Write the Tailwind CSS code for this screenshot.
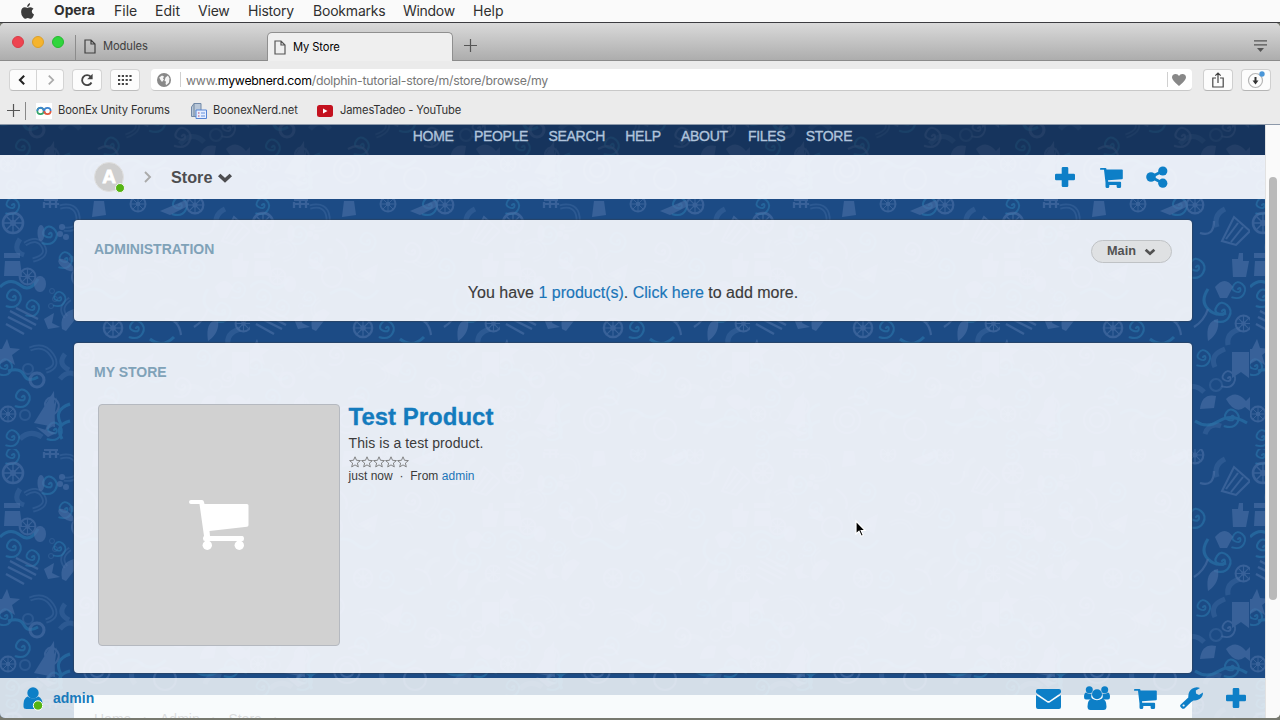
<!DOCTYPE html>
<html lang="en">
<head>
  <meta charset="UTF-8">
  <meta name="viewport" content="width=device-width, initial-scale=1">
  <title>My Store</title>
  <script src="https://cdn.jsdelivr.net/npm/@tailwindcss/browser@4"></script>
</head>
<body class="w-[1280px] h-[720px] overflow-hidden bg-[#77796f] flex flex-col relative">

  <!-- Shared icons -->
  <svg class="hidden">
    <symbol id="cart" viewBox="0 0 60 50">
      <path d="M2 0h11q1.500 0 2 2l.5 2H58q1.500 0 1.500 1.500v19.500q0 1.500-1.500 1.700L20.500 31l.5 5h32.500q1.500 0 1.500 2.500T53.500 41H16q-2 0-2-2.500 0-2 1-2.500L10.500 4H2Q0 4 0 2T2 0z"/>
      <circle cx="18.300" cy="45.300" r="4.700"/><circle cx="50.300" cy="45.300" r="4.700"/>
    </symbol>
    <symbol id="cart-sm" viewBox="0 0 23 20">
      <path d="M.8 0h4.700q.8 0 .9.8l.1.600h15.500q.8 0 .8.8v8q0 .9-.9 1L8 12.200l.2 1.600h12q.9 0 .9 1v3.700q0 1.500-1.500 1.500h-1.500q-1.500 0-1.500-1.500v-1.500H9.300v1.500q0 1.500-1.500 1.500H7q-1.500 0-1.500-1.500v-4L4 1.800H.8Q0 1.800 0 .9T.8 0z"/>
    </symbol>
    <symbol id="plus" viewBox="0 0 20 20">
      <path d="M8 0h4q1.300 0 1.300 1.300v5.400h5.400Q20 6.700 20 8v4q0 1.300-1.300 1.300h-5.400v5.400Q13.300 20 12 20H8q-1.300 0-1.300-1.300v-5.400H1.300Q0 13.300 0 12V8q0-1.300 1.300-1.300h5.400V1.300Q6.700 0 8 0z"/>
    </symbol>
    <symbol id="page" viewBox="0 0 12 15">
      <path d="M1 1h6l4 4v9H1zM7 1v4h4" fill="none" stroke="currentColor" stroke-width="1.200"/>
    </symbol>
    <symbol id="chevron" viewBox="0 0 16 10">
      <path d="M2.200 2 8 7.300 13.800 2" fill="none" stroke="currentColor" stroke-width="3.600" stroke-linecap="butt"/>
    </symbol>
    <symbol id="star" viewBox="0 0 12 12">
      <path d="M6 .8 7.500 4.300l3.900.3-3 2.500.9 3.800L6 8.900 2.700 10.900l.9-3.800-3-2.500 3.900-.3z" fill="none" stroke="currentColor" stroke-width=".9"/>
    </symbol>
    <symbol id="swirl" viewBox="-12 -12 24 24" overflow="visible">
      <path d="M0 0q3-3 3 1t-6 2-2-8 10-1 2 12-14 4" fill="none" stroke="currentColor" stroke-width="2.200" stroke-linecap="round"/>
    </symbol>
    <symbol id="wheel" viewBox="-12 -12 24 24" overflow="visible">
      <circle r="10" fill="none" stroke="currentColor" stroke-width="2.500"/>
      <circle r="3" fill="currentColor"/>
      <path d="M0-10V10M-10 0H10M-7-7 7 7M7-7-7 7" stroke="currentColor" stroke-width="1.300"/>
    </symbol>
  </svg>

  <!-- macOS menu bar -->
  <header class="h-[23px] shrink-0 bg-[#fafafa] border-b border-[#3c3c40] flex items-center pl-[21px] pb-px text-[14px] text-[#303030] whitespace-nowrap font-['Inter',sans-serif]">
    <svg class="w-[13px] h-[16px] mr-[20px]" viewBox="0 0 13 16" fill="#3c3c3c"><path d="M9 0q.2 2-1 3.100Q7 4.200 6.200 4.100 6 2.500 7.100 1.300 8 .3 9 0zM12.500 5.700q-1.800 1-1.700 2.900.1 2.100 2.200 3-.5 1.500-1.400 2.800-.9 1.400-1.900 1.400-.5 0-1.300-.3-.8-.4-1.600-.4t-1.600.4q-.7.300-1.200.300-1 0-2.100-1.700Q.1 11.500.1 8.900q0-2.300 1.200-3.600 1-1.100 2.400-1.100.6 0 1.500.4t1.200.4q.300 0 1.400-.4 1-.4 1.700-.4 1.800.1 3 1.500z"/></svg>
    <span class="w-[60px] font-bold text-[13.800px]">Opera</span>
    <span class="w-[41px]">File</span>
    <span class="w-[43px]">Edit</span>
    <span class="w-[50px] tracking-[-0.2px]">View</span>
    <span class="w-[65px] tracking-[-0.2px]">History</span>
    <span class="w-[90px] tracking-[-0.2px]">Bookmarks</span>
    <span class="w-[70px] tracking-[-0.3px]">Window</span>
    <span>Help</span>
  </header>

  <div class="h-[695px] shrink-0 flex flex-col rounded-t-[5px] rounded-b-[5px] overflow-hidden bg-[#ebebeb] font-['Inter',sans-serif]">

    <!-- Tabs -->
    <div class="h-[38px] shrink-0 bg-linear-to-b from-[#dadada] to-[#adadad] border-b border-[#8b8b8b] flex items-end relative">
      <div class="w-[75px] h-full flex gap-[8px] pl-[12px] pt-[13px]">
        <i class="size-[12px] rounded-full bg-[#ee4450] border border-[#d83c47]"></i>
        <i class="size-[12px] rounded-full bg-[#f5b42e] border border-[#dca02a]"></i>
        <i class="size-[12px] rounded-full bg-[#2fd53c] border border-[#25b931]"></i>
      </div>
      <div class="w-[192px] h-[25px] border-l border-[#8c8c8c] flex items-center gap-[7px] pl-[8px] pb-[2px] text-[11.200px] text-[#404040]">
        <svg class="w-[12px] h-[15px]"><use href="#page"/></svg>
        <span class="tracking-[-0.1px]">Modules</span>
      </div>
      <div class="w-[186px] h-[29px] -mb-px rounded-t-[5px] bg-[#efefef] border border-b-0 border-[#8f8f8f] flex items-center gap-[7px] pl-[6px] text-[11.200px] text-black">
        <svg class="w-[12px] h-[15px] text-[#555]"><use href="#page"/></svg>
        <span class="tracking-[-0.1px]">My Store</span>
      </div>
      <svg class="size-[13px] ml-[11px] mb-[8px]" viewBox="0 0 13 13" stroke="#555" stroke-width="1.200"><path d="M6.500 0v13M0 6.500h13"/></svg>
      <svg class="w-[13px] h-[12px] ml-auto mr-[13px] mb-[8px]" viewBox="0 0 13 12"><path d="M0 .8h13M0 4.900h13" stroke="#555" stroke-width="1.200"/><path d="M3 8h7l-3.500 4z" fill="#555"/></svg>
    </div>

    <!-- Address bar -->
    <div class="h-[37px] shrink-0 flex items-center pl-[9px] pr-[9px] pt-px">
      <div class="flex h-[22px] w-[55px] rounded-[4px] bg-[#fcfcfc] border border-[#d4d4d4] border-b-[#bdbdbd]">
        <svg class="w-1/2 h-full border-r border-[#d4d4d4]" viewBox="0 0 27 20"><path d="M15 5.500 10.500 10l4.500 4.500" fill="none" stroke="#222" stroke-width="2.200"/></svg>
        <svg class="w-1/2 h-full" viewBox="0 0 27 20"><path d="m12 5.500 4.500 4.500-4.500 4.500" fill="none" stroke="#aaa" stroke-width="1.800"/></svg>
      </div>
      <div class="ml-[8px] w-[30px] h-[22px] rounded-[4px] bg-[#fcfcfc] border border-[#d4d4d4] border-b-[#bdbdbd] flex items-center justify-center">
        <svg class="size-[14px]" viewBox="0 0 14 14"><path d="M11.500 9.500A5 5 0 1 1 10.800 3.800" fill="none" stroke="#444" stroke-width="1.900"/><path d="M12.600.8v5.400H7.200z" fill="#444"/></svg>
      </div>
      <div class="ml-[8px] w-[30px] h-[22px] rounded-[4px] bg-[#fcfcfc] border border-[#d4d4d4] border-b-[#bdbdbd] flex items-center justify-center">
        <svg class="w-[14px] h-[12px]" viewBox="0 0 14 12" stroke="#444" stroke-width="2"><path d="M0 2h14M0 6h14M0 10h10" stroke-dasharray="2.200 1.600"/></svg>
      </div>
      <div class="ml-[11px] w-[1041px] h-[22px] rounded-[4px] bg-white border-b border-[#c8c8c8] flex items-center pl-[6px] pr-[6px]">
        <svg class="size-[14px]" viewBox="0 0 14 14"><circle cx="7" cy="7" r="7" fill="#888"/><path d="M2.200 4.500 5 2.500l2 1-1 2 1 1-2 2.500L3.500 7zM8.500 4.500l2.500-2 1.500 3-.5 4-2.500 2.500-1-1 .5-2.500-1.500-.5z" fill="#f5f5f5"/></svg>
        <div class="w-px h-[15px] bg-[#d0d0d0] ml-[9px] mr-[5px]"></div>
        <span class="text-[12.300px] leading-[15px] tracking-[-0.25px] text-[#777] whitespace-nowrap pt-px">www.<span class="text-black">mywebnerd.com</span>/dolphin-tutorial-store/m/store/browse/my</span>
        <div class="w-px h-[15px] bg-[#d0d0d0] ml-auto mr-[4px]"></div>
        <svg class="w-[14px] h-[12px]" viewBox="0 0 14 12"><path d="M7 12Q0 6.500 0 3.600 0 0 3.700 0 6 0 7 2 8 0 10.300 0 14 0 14 3.600 14 6.500 7 12z" fill="#888"/></svg>
      </div>
      <div class="ml-auto w-[30px] h-[22px] rounded-[4px] bg-[#fcfcfc] border border-[#cfcfcf] border-b-[#b5b5b5] flex items-center justify-center">
        <svg class="w-[12px] h-[16px]" viewBox="0 0 12 16" fill="none" stroke="#444" stroke-width="1.200"><path d="M4 6H.8v9h10.400V6H8M6 11V1M3.300 3.700 6 1l2.700 2.700"/></svg>
      </div>
      <div class="ml-[8px] w-[30px] h-[22px] rounded-[4px] bg-[#fcfcfc] border border-[#cfcfcf] border-b-[#b5b5b5] flex items-center justify-center">
        <svg class="w-[18px] h-[18px]" viewBox="0 0 18 18"><circle cx="8.500" cy="9.500" r="7" fill="none" stroke="#b5b5b5" stroke-width="1.200"/><path d="M7.500 6h2v3.500h2l-3 4-3-4h2z" fill="#333"/><circle cx="15" cy="3" r="2.700" fill="#4a96d8"/></svg>
      </div>
    </div>

    <!-- Bookmarks -->
    <div class="h-[27px] shrink-0 border-b border-[#8d99aa] flex items-center pl-[7px] pb-px text-[11.200px] text-[#333] whitespace-nowrap">
      <svg class="size-[13px]" viewBox="0 0 13 13" stroke="#555" stroke-width="1.200"><path d="M6.500 0v13M0 6.500h13"/></svg>
      <div class="w-px h-[18px] bg-[#888] ml-[5px] mr-[10px]"></div>
      <svg class="size-[16px] bg-white" viewBox="0 0 16 16" fill="none" stroke-width="1.700"><circle cx="4.500" cy="8" r="3.200" stroke="#35a56b"/><path d="M1.300 8a3.200 3.200 0 0 1 5.500-2.300L9.300 10.300" stroke="#3d83cf"/><path d="M8.300 8a3.200 3.200 0 0 1 6.400 0" stroke="#3d83cf"/><path d="M14.700 8a3.200 3.200 0 0 1-6.400 0" stroke="#e3593e"/></svg>
      <span class="w-[132px] ml-[6px] tracking-[-0.1px]">BoonEx Unity Forums</span>
      <svg class="w-[17px] h-[16px]" viewBox="0 0 17 16"><path d="M4 .5h7v13H1.500V4z" fill="#b9c7d8" stroke="#7189a8"/><path d="M4 .5v13" stroke="#71869e"/><path d="M6 7h10.500v8.500H6z" fill="#e5eeff" stroke="#5584d4"/><path d="M8 10h1.500M8 13h1.500" stroke="#b64770"/><path d="M11 10h4M11 13h4" stroke="#6591dc"/></svg>
      <span class="w-[104px] ml-[6px] tracking-[-0.05px]">BoonexNerd.net</span>
      <svg class="w-[16px] h-[12px]" viewBox="0 0 16 12"><rect width="16" height="12" rx="2.500" fill="#c4121f"/><path d="M6 3.500v5L10.500 6z" fill="#fff"/></svg>
      <span class="ml-[7px] tracking-[-0.15px]">JamesTadeo - YouTube</span>
    </div>

    <!-- Page -->
    <div class="flex-1 flex min-h-0 font-['Liberation_Sans',Arial,sans-serif]">
      <main class="w-[1265px] relative overflow-hidden">

        <svg class="absolute inset-0 w-full h-full" aria-hidden="true">
          <defs>
            <pattern id="doodles" width="250" height="250" y="74" patternUnits="userSpaceOnUse">
              <rect width="250" height="250" fill="#1c4b85"/>
              <!-- faint filler behind the larger figures -->
              <g color="#3c689f" opacity=".5">
                <path d="M25 45q12-8 18 2t-10 14M60 8q16-4 18 10t-14 12M110 55q-14 6-8 18t18 2M140 75q16-8 22 6M70 100q-12 8-4 18M180 40q12 8 4 20t-20 2M225 10q-12 6-8 18M30 150q14-6 22 6t-6 16M60 180q10-12 20 0M110 165q14-8 24 4t-8 18M180 195q12-14 24-2M135 235q-10-14 8-20M20 240q10-10 22-2M190 110q-12 0-14 14M155 110q10-14 22-4M65 155q-8 10 4 16M205 235q4-12 16-8M240 130q-14 4-12 16M20 40q-8 12 4 16M225 150q-16 6-10 18" fill="none" stroke="currentColor" stroke-width="5"/>
                <path d="M25 45q12-8 18 2t-10 14M60 8q16-4 18 10t-14 12M110 55q-14 6-8 18t18 2M140 75q16-8 22 6M70 100q-12 8-4 18M180 40q12 8 4 20t-20 2M30 150q14-6 22 6t-6 16M110 165q14-8 24 4t-8 18" fill="none" stroke="#1c4b85" stroke-width="1.500"/>
                <circle cx="72" cy="60" r="3" fill="currentColor"/><circle cx="80" cy="52" r="3" fill="currentColor"/><circle cx="52" cy="92" r="2.500" fill="none" stroke="currentColor"/><circle cx="55" cy="100" r="2.500" fill="none" stroke="currentColor"/><circle cx="51" cy="107" r="2.500" fill="none" stroke="currentColor"/>
                <circle cx="28" cy="170" r="5" fill="none" stroke="currentColor" stroke-width="2"/><circle cx="25" cy="216" r="5" fill="none" stroke="currentColor" stroke-width="2"/><circle cx="216" cy="186" r="6" fill="none" stroke="currentColor" stroke-width="2"/>
              </g>
              <g color="#2976ab" opacity=".6">
                <use href="#swirl" x="2" y="-4" width="20" height="20"/>
                <use href="#swirl" x="38" y="24" width="22" height="22"/>
                <use href="#swirl" x="55" y="50" width="20" height="20"/>
                <use href="#swirl" x="2" y="87" width="22" height="22"/>
                <use href="#swirl" x="22" y="98" width="20" height="20"/>
                <use href="#swirl" x="50" y="90" width="18" height="18"/>
                <use href="#swirl" x="125" y="118" width="22" height="22"/>
                <use href="#swirl" x="168" y="-5" width="22" height="22"/>
                <use href="#swirl" x="184" y="56" width="24" height="24"/>
                <use href="#swirl" x="210" y="100" width="24" height="24"/>
                <use href="#swirl" x="228" y="80" width="20" height="20"/>
                <use href="#swirl" x="-5" y="157" width="20" height="20"/>
                <use href="#swirl" x="11" y="187" width="22" height="22"/>
                <use href="#swirl" x="43" y="220" width="22" height="22"/>
                <use href="#swirl" x="2" y="228" width="20" height="20"/>
                <use href="#swirl" x="193" y="148" width="20" height="20"/>
                <use href="#swirl" x="220" y="207" width="22" height="22"/>
                <use href="#swirl" x="100" y="185" width="22" height="22"/>
                <use href="#swirl" x="145" y="160" width="24" height="24"/>
                <use href="#swirl" x="105" y="30" width="24" height="24"/>
                <path d="M0 88q10-10 20-2t18-6M8 172q12-4 16 4t14 2M62 240q-8-14 8-18M70 205q-18 6-8 22M195 222q12 8 24 0t28 2M208 90q-8 12 0 20t18 4M80 95q14-10 26 0t22-4M120 215q12-8 22 0t24-4M150 140q12 10 24-2" fill="none" stroke="currentColor" stroke-width="3"/>
              </g>
              <g color="#4a70a6" opacity=".6">
                <use href="#wheel" x="1" y="12" width="24" height="24"/>
                <use href="#wheel" x="102" y="118" width="22" height="22"/>
                <use href="#wheel" x="129" y="-4" width="18" height="18"/>
                <use href="#wheel" x="185" y="-4" width="20" height="20"/>
                <use href="#wheel" x="18" y="68" width="19" height="19"/>
                <use href="#wheel" x="-1" y="206" width="18" height="18"/>
                <use href="#wheel" x="234" y="115" width="19" height="19"/>
                <use href="#swirl" x="218" y="169" width="20" height="20"/>
                <use href="#swirl" x="40" y="195" width="22" height="22"/>
                <use href="#swirl" x="75" y="145" width="22" height="22"/>
                <use href="#swirl" x="170" y="175" width="24" height="24"/>
                <use href="#swirl" x="150" y="40" width="24" height="24"/>
                <g fill="currentColor">
                  <path d="M94 2h10l2 14-14 2zM34 224l20-32 1 36zM57 198l-4 29-8 5zM36 228l20 6-8 4z"/>
                  <path d="m7 140 3 9 10 1-8 6 3 10-8-5-9 5 2-10-7-6h9z"/>
                  <path d="m160 12 26-11 2 6-18 9z"/>
                  <path d="M232 60h6l1-6h4v8h6l-3 16h-13zM232 153h17v26l-8-6-9 6zM215 88q10-12 18 0l-6 11h-7z"/>
                  <path d="M200 210q2-16 16-13l-2 12zM226 200q10-10 20 2l4-4v14l-5-4q-10 8-19-8z"/>
                  <path d="M4 54h16v5H4zM5 62h15l2 15H4zM208 142q-3-20 10-22 2 14-10 22z"/>
                  <path d="M62 130q-3-16 12-20l6 4-14 18zM44 120l10-6-2 10 8 4-12 2zM108 75l20-10-4 20zM130 170l24-16-6 24z"/>
                  <ellipse cx="41" cy="34" rx="3.500" ry="8"/><circle cx="62" cy="28" r="3"/><circle cx="60" cy="35" r="3"/><circle cx="66" cy="38" r="3"/><ellipse cx="40" cy="85" rx="6" ry="8"/>
                  <ellipse cx="66" cy="66" rx="9" ry="4" transform="rotate(35 66 66)"/>
                </g>
                <circle cx="37" cy="181" r="7" fill="none" stroke="currentColor" stroke-width="3"/>
                <path d="m222 42 12-24 16 14-14 14zM226 40l12-16M231 43l12-15" fill="none" stroke="currentColor" stroke-width="2"/>
                <path d="m8 118 24 12M10 112l26 14M16 109l22 11M6 125l18 10M44 1h14M43 5h16M44 3v6M50 1v8M56 1v8M194 128q10-6 14-18M86 40q14 8 10 20M98 200q14-8 20 6M165 120q14 0 16 16M200 34q14 4 14-12" fill="none" stroke="currentColor" stroke-width="2.200"/>
                <circle cx="97" cy="221" r="13" fill="none" stroke="currentColor" stroke-width="2"/><circle cx="97" cy="221" r="7" fill="none" stroke="currentColor" stroke-width="2"/>
                <circle cx="165" cy="230" r="11" fill="none" stroke="currentColor" stroke-width="2"/><circle cx="82" cy="78" r="10" fill="none" stroke="currentColor" stroke-width="2"/>
              </g>
            </pattern>
          </defs>
          <rect width="1265" height="593" fill="url(#doodles)"/>
        </svg>

        <div class="relative flex flex-col">
          <nav class="h-[30px] bg-[#13233d]/55 flex justify-center gap-[20.300px] pt-[3px] text-[14px] leading-[16px] tracking-[-0.3px] text-[#b0c4dc] [-webkit-text-stroke:0.35px_#b0c4dc]">
            <a>HOME</a><a>PEOPLE</a><a>SEARCH</a><a>HELP</a><a>ABOUT</a><a>FILES</a><a>STORE</a>
          </nav>

          <!-- Breadcrumb -->
          <div class="h-[44px] bg-[#f5f8fd]/94 flex items-center pl-[94px] pr-[97px]">
            <div class="size-[30px] rounded-full bg-[#cecece] border border-[#e0e0e0] flex items-center justify-center relative text-white text-[19px] font-bold [-webkit-text-stroke:0.8px_white]">A
              <i class="absolute left-[20px] top-[20px] size-[10px] rounded-full bg-[#55b413] border border-[#f5f5f5]"></i>
            </div>
            <svg class="w-[8px] h-[12px] ml-[20px]" viewBox="0 0 8 12"><path d="m1 1 5 5-5 5" fill="none" stroke="#aaa" stroke-width="1.900"/></svg>
            <span class="ml-[19px] text-[16.200px] font-bold text-[#4d4d50]">Store</span>
            <svg class="w-[16px] h-[10px] ml-[5px] mt-[2px] text-[#4d4d50]"><use href="#chevron"/></svg>
            <div class="ml-auto flex items-center text-[#0d7fc7] fill-current">
              <svg class="size-[20px] mr-[25px]"><use href="#plus"/></svg>
              <svg class="w-[23px] h-[20px] mr-[23px] mt-[2px]"><use href="#cart-sm"/></svg>
              <svg class="w-[22px] h-[22px]" viewBox="0 0 22 22"><circle cx="5" cy="11" r="4.800"/><circle cx="16.800" cy="5" r="4.600"/><circle cx="16.800" cy="17.200" r="4.600"/><path d="M16.800 5 5 11l11.800 6.200" fill="none" stroke="currentColor" stroke-width="2.800"/></svg>
            </div>
          </div>

          <div class="mt-[21px] ml-[74px] w-[1118px] flex flex-col gap-[22px]">
            <section class="h-[101px] rounded-[4px] bg-[#f8fafe]/92 shadow-[0_0_1px_1px_rgba(50,60,75,0.5)] pl-[20px] pr-[20px] pt-[20px]">
              <div class="flex justify-between">
                <h2 class="text-[14px] leading-[18px] font-bold text-[#80a2b8]">ADMINISTRATION</h2>
                <button class="w-[81px] h-[23px] rounded-full bg-[#dfe1e3] border border-[#bfc2c5] flex items-center justify-center gap-[8px] text-[12.700px] font-bold text-[#525252]">Main
                  <svg class="w-[12px] h-[8px]" viewBox="0 0 16 10"><use href="#chevron"/></svg>
                </button>
              </div>
              <p class="mt-[20px] text-center text-[16px] leading-[20px] text-[#3b3b3b] [-webkit-text-stroke:0.15px]">You have <a class="text-[#1a75b8]">1 product(s)</a>. <a class="text-[#1a75b8]">Click here</a> to add more.</p>
            </section>

            <section class="h-[330px] rounded-[4px] bg-[#f8fafe]/92 shadow-[0_0_1px_1px_rgba(50,60,75,0.5)] pl-[20px] pt-[20px]">
              <h2 class="text-[14px] leading-[18px] font-bold text-[#80a2b8]">MY STORE</h2>
              <div class="flex mt-[23px] ml-[4px]">
                <div class="size-[242px] rounded-[4px] bg-[#d1d1d1] border border-[#b5b9c0] flex items-center justify-center">
                  <svg class="w-[60px] h-[50px] fill-white"><use href="#cart"/></svg>
                </div>
                <div class="ml-[8.500px] text-[#3b3b3b]">
                  <h3 class="text-[24px] leading-[26px] font-bold text-[#147bbd] [-webkit-text-stroke:0.3px]">Test Product</h3>
                  <p class="mt-[4px] text-[14px] leading-[18px] tracking-[0.08px]">This is a test product.</p>
                  <div class="flex mt-[4px] text-[#777]">
                    <svg class="size-[12px]"><use href="#star"/></svg>
                    <svg class="size-[12px]"><use href="#star"/></svg>
                    <svg class="size-[12px]"><use href="#star"/></svg>
                    <svg class="size-[12px]"><use href="#star"/></svg>
                    <svg class="size-[12px]"><use href="#star"/></svg>
                  </div>
                  <p class="text-[12px] leading-[16px] tracking-[0.03px]">just now &nbsp;·&nbsp; From <a class="text-[#1a75b8]">admin</a></p>
                </div>
              </div>
            </section>

            <section class="h-[60px] rounded-[4px] bg-[#f8fafe] flex gap-[12px] pl-[20px] pt-[16px] text-[14px] leading-[16px] text-[#444]">
              <a>Home</a><span>›</span><a>Admin</a><span>›</span><a>Store</a><span>›</span>
            </section>
          </div>
        </div>

        <!-- Bottom toolbar -->
        <div class="absolute left-0 bottom-0 w-[1265px] h-[40px] bg-[#f8fafc]/84 flex items-center pl-[23px] pr-[19px] text-[#0d7fc7] fill-current">
          <svg class="w-[20px] h-[24px] mt-[2px]" viewBox="0 0 20 24"><path d="M4.500 9.500q5.500 4 11 0 4 2 4 7.500v2.500q0 2.500-3 2.500h-13q-3 0-3-2.500V17q0-5.500 4-7.500z"/><circle cx="10" cy="6" r="5.700"/><circle cx="15" cy="18.500" r="4.700" fill="#55b413" stroke="#fff"/></svg>
          <span class="ml-[10px] text-[14px] font-bold text-[#197abb]">admin</span>
          <div class="ml-auto flex items-center">
            <svg class="w-[25px] h-[20px] mr-[23px] mt-[2px]" viewBox="0 0 25 20"><path d="M2 0h21q2 0 2 2v1q0 .8-1 1.500l-10 7q-1.500 1-3 0l-10-7Q0 3.800 0 3V2q0-2 2-2zM0 6l11 7.300q1.500 1 3 0L25 6v12q0 2-2 2H2q-2 0-2-2z"/></svg>
            <svg class="w-[26px] h-[24px] mr-[24px]" viewBox="0 0 26 24"><circle cx="5.300" cy="3.700" r="3.500"/><circle cx="20.700" cy="3.700" r="3.500"/><path d="M2 6.500q3 2 5.500 1-1 3.500 1 6H2q-2 0-2-2.500 0-4 2-4.500zM24 6.500q-3 2-5.500 1 1 3.500-1 6H24q2 0 2-2.500 0-4-2-4.500z"/><circle cx="13" cy="8.300" r="5"/><path d="M8 12.500q5 3.500 10 0 4.500 1 4.500 8 0 3.500-3 3.500h-13q-3 0-3-3.500 0-7 4.500-8z"/></svg>
            <svg class="w-[23px] h-[20px] mr-[23px] mt-[2px]"><use href="#cart-sm"/></svg>
            <svg class="w-[23px] h-[22px] mr-[23px]" viewBox="0 0 23 22"><path d="M11.200 15 5 21q-1.700 1.700-3.500 0l-.7-.7q-1.500-1.500.2-3.100L8.300 10.500Q8 4.500 12 1.800 16-1 20 .9L15.800 3.500 16 6.600l3 1.500L23 5.600q0 4-3.500 6.500-3 2-6 1.300z"/><circle cx="3.600" cy="18.500" r="1.100" fill="#eef3f7"/></svg>
            <svg class="size-[20px]"><use href="#plus"/></svg>
          </div>
        </div>
      </main>

      <!-- Scrollbar -->
      <div class="w-[15px] bg-[#fafafa] border-l border-[#e2e2e2] pt-[52px] pl-[3px]">
        <div class="w-[8px] h-[423px] rounded-full bg-[#b9b9b9]"></div>
      </div>
    </div>
  </div>

  <!-- Mouse pointer -->
  <svg class="absolute left-[854px] top-[519px] w-[13px] h-[20px]" viewBox="0 0 13 20"><path d="M2 2v13l3-2.700 2.300 5 2-1L7.200 11.500h4z" fill="#000" stroke="#fff" stroke-width="1.200"/></svg>
</body>
</html>
